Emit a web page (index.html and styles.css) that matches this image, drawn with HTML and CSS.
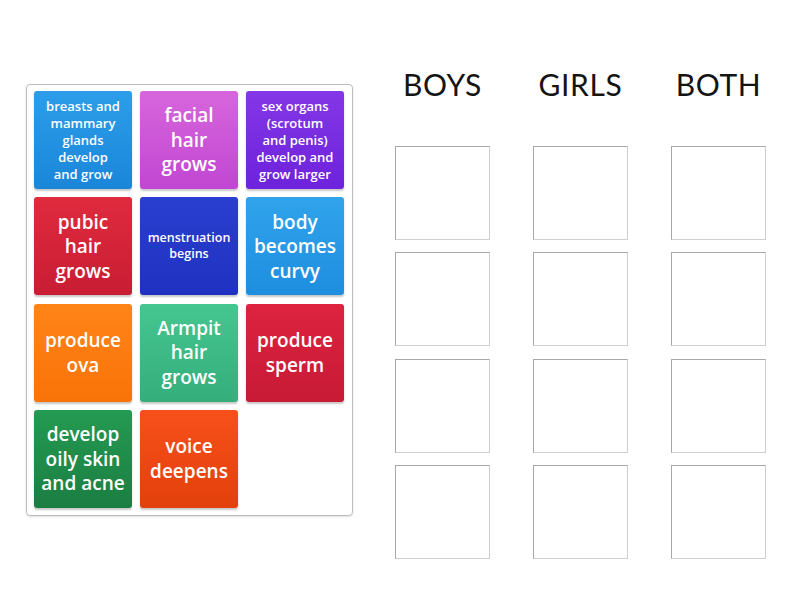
FILE: index.html
```html
<!DOCTYPE html>
<html>
<head>
<meta charset="utf-8">
<link rel="stylesheet" href="styles.css">
</head>
<body>
<div class="stage">
  <div class="bank">
    <div class="tile sm c-blue">breasts and<br>mammary<br>glands<br>develop<br>and grow</div>
    <div class="tile lg c-magenta">facial<br>hair<br>grows</div>
    <div class="tile sm c-purple">sex organs<br>(scrotum<br>and penis)<br>develop and<br>grow larger</div>
    <div class="tile lg c-red">pubic<br>hair<br>grows</div>
    <div class="tile xs c-navy">menstruation<br>begins</div>
    <div class="tile lg c-sky">body<br>becomes<br>curvy</div>
    <div class="tile lg c-orange">produce<br>ova</div>
    <div class="tile lg c-mint">Armpit<br>hair<br>grows</div>
    <div class="tile lg c-crimson">produce<br>sperm</div>
    <div class="tile lg c-green">develop<br>oily skin<br>and acne</div>
    <div class="tile lg c-vermil">voice<br>deepens</div>
  </div>
  <div class="columns">
    <div class="col">
      <div class="head">BOYS</div>
      <div class="slots"><div class="slot"></div><div class="slot"></div><div class="slot"></div><div class="slot"></div></div>
    </div>
    <div class="col">
      <div class="head">GIRLS</div>
      <div class="slots"><div class="slot"></div><div class="slot"></div><div class="slot"></div><div class="slot"></div></div>
    </div>
    <div class="col">
      <div class="head">BOTH</div>
      <div class="slots"><div class="slot"></div><div class="slot"></div><div class="slot"></div><div class="slot"></div></div>
    </div>
  </div>
</div>
</body>
</html>
```
FILE: styles.css
```css
html, body {
  margin: 0;
  padding: 0;
  background: #ffffff;
}
.stage {
  display: flex;
  align-items: flex-start;
  padding-left: 26px;
  width: 800px;
  height: 600px;
  box-sizing: border-box;
}
.bank {
  margin-top: 84px;
  width: 327px;
  height: 432px;
  box-sizing: border-box;
  border: 1px solid #bdbdbd;
  border-radius: 4px;
  padding: 6px 8px 7px 7px;
  display: grid;
  grid-template-columns: repeat(3, 98px);
  grid-auto-rows: 98px;
  column-gap: 8px;
  row-gap: 8.3px;
  align-content: start;
  box-shadow: 0 1px 2px rgba(0,0,0,0.12);
}
.tile {
  display: flex;
  align-items: center;
  justify-content: center;
  text-align: center;
  color: #ffffff;
  font-family: "Open Sans", Lato, sans-serif;
  font-weight: 600;
  border-radius: 3px;
  padding: 0 3px;
  white-space: nowrap;
  box-shadow: 0 2px 2px rgba(0,0,0,0.22);
  box-sizing: border-box;
}
.tile.sm { font-size: 13px; line-height: 17px; }
.tile.xs { font-size: 12.5px; line-height: 16.5px; }
.tile.lg { font-size: 19px; line-height: 24.5px; }

.c-blue    { background: linear-gradient(#2c9ee9, #1a86d9); }
.c-magenta { background: linear-gradient(#d766dc, #c146d2); }
.c-purple  { background: linear-gradient(#8437e6, #6d22dc); }
.c-red     { background: linear-gradient(#e02a3e, #c81d33); }
.c-navy    { background: linear-gradient(#2a3fd0, #1f31c0); }
.c-sky     { background: linear-gradient(#30a3ec, #1e8edf); }
.c-orange  { background: linear-gradient(#ff8418, #f97308); }
.c-mint    { background: linear-gradient(#45c690, #35ae7c); }
.c-crimson { background: linear-gradient(#dd2340, #c71a35); }
.c-green   { background: linear-gradient(#249a52, #1b7e42); }
.c-vermil  { background: linear-gradient(#f8501a, #e2400c); }

.columns {
  display: flex;
  margin-left: 42px;
  gap: 43px;
  padding-top: 66px;
}
.col {
  width: 95px;
  display: flex;
  flex-direction: column;
  align-items: center;
}
.head {
  font-family: Lato, "Liberation Sans", sans-serif;
  font-weight: 400;
  font-size: 30px;
  line-height: 36px;
  color: #141414;
  white-space: nowrap;
  letter-spacing: 0.6px;
}
.slots {
  margin-top: 44px;
  display: flex;
  flex-direction: column;
  gap: 12.3px;
}
.slot {
  width: 95px;
  height: 94px;
  box-sizing: border-box;
  border: 1px solid #cfcfcf;
  border-top-color: #a8a8a8;
  border-left-color: #a8a8a8;
}
```
